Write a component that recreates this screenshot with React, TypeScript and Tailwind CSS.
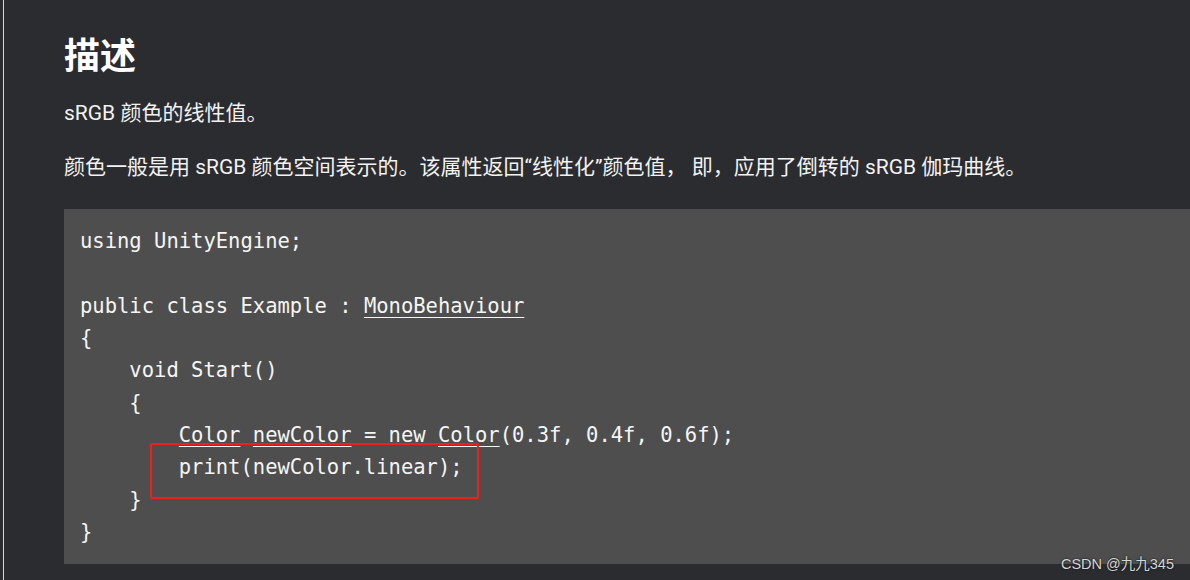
const code = "font-['DejaVu_Sans_Mono','Liberation_Mono',monospace]";

const Line = ({ children }: { children?: React.ReactNode }) => (
  <div className="h-[32.33px] leading-[32.33px] whitespace-pre">{children}</div>
);

const U = ({ children }: { children: React.ReactNode }) => (
  <span className="underline decoration-1 underline-offset-[4px]">{children}</span>
);

export default function App() {
  return (
    <div className="relative w-[1190px] h-[580px] overflow-hidden bg-[#2b2c30] font-['Roboto','Noto_Sans_CJK_SC',sans-serif] text-[#f2f2f2]">
      <div className="absolute left-[3px] top-0 h-full w-px bg-[#d8d8d8]" />

      <div className="pl-[64px] pt-[39px]">
        <h1 className="text-[36px] leading-[36px] font-bold text-white">描述</h1>
        <p className="mt-[28px] text-[21px] leading-[21px]">sRGB 颜色的线性值。</p>
        <p className="mt-[33px] text-[21px] leading-[21px]">
          颜色一般是用 sRGB 颜色空间表示的。该属性返回“线性化”颜色值， 即，应用了倒转的 sRGB 伽玛曲线。
        </p>

        <div className={`relative mt-[31px] bg-[#4e4e4e] px-4 py-4 text-[20.5px] text-[#f5f5f5] ${code}`}>
          <Line>using UnityEngine;</Line>
          <Line />
          <Line>
            public class Example : <U>MonoBehaviour</U>
          </Line>
          <Line>{"{"}</Line>
          <Line>{"    void Start()"}</Line>
          <Line>{"    {"}</Line>
          <Line>
            {"        "}
            <U>Color</U> <U>newColor</U> = new <U>Color</U>(0.3f, 0.4f, 0.6f);
          </Line>
          <Line>{"        print(newColor.linear);"}</Line>
          <Line>{"    }"}</Line>
          <Line>{"}"}</Line>

          <div className="absolute left-[86px] top-[234px] w-[329px] h-[56px] border-2 border-[#f01e1e] rounded-[2px]" />
        </div>
      </div>

      <div className="absolute right-[16px] top-[555px] text-[14.5px] leading-[18px] text-[#d6d6d6] [text-shadow:0_0_2px_#000] font-['Liberation_Sans','Noto_Sans_CJK_SC',sans-serif]">
        CSDN @九九345
      </div>
    </div>
  );
}
